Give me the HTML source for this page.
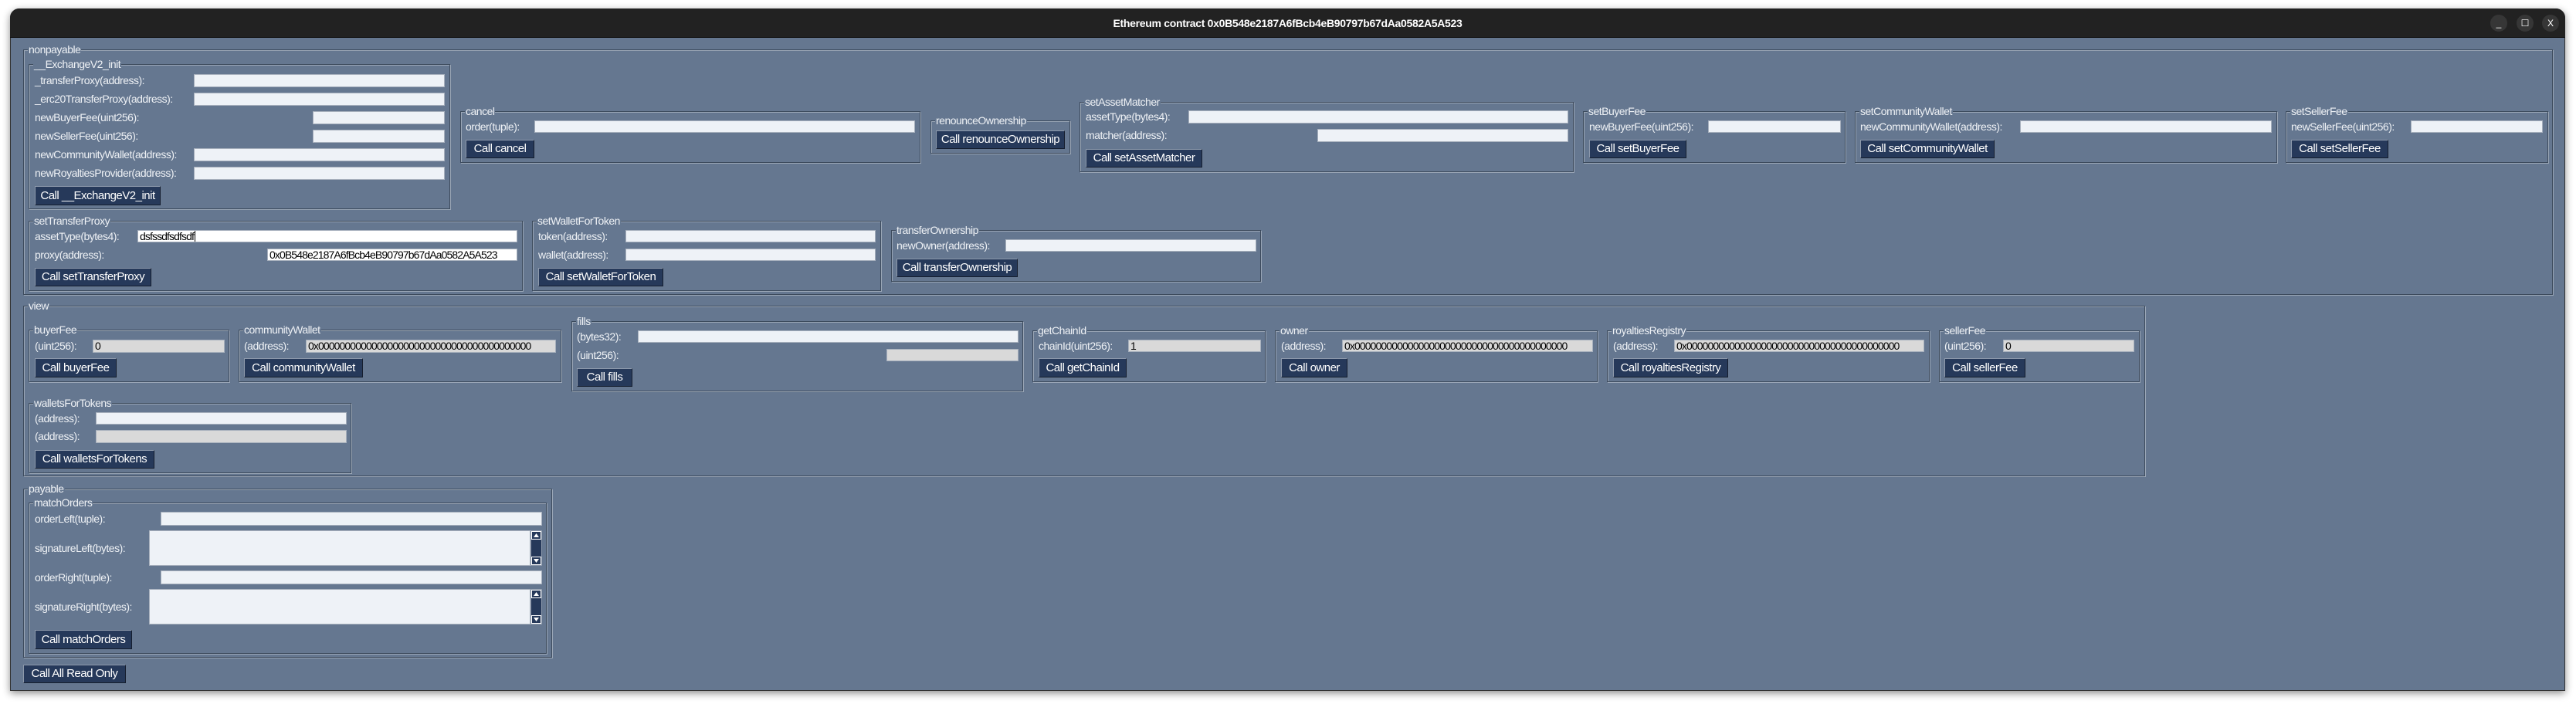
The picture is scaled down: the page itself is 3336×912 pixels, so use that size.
<!DOCTYPE html>
<html><head><meta charset="utf-8">
<style>
*{box-sizing:border-box;margin:0;padding:0}
html,body{width:3336px;height:912px;background:#fff;overflow:hidden;font-family:"Liberation Sans",sans-serif;font-size:14px;letter-spacing:-0.5px;color:#eef1f5}
#win{position:absolute;left:13px;top:11px;width:3309px;height:884px;background:#657790;border-radius:12px 12px 0 0;box-shadow:0 3px 10px rgba(0,0,0,.45);border:1px solid #333}
#tb{position:absolute;left:13px;top:11px;width:3309px;height:38px;background:#222;border-radius:12px 12px 0 0;border-bottom:1px solid #111}
#title{position:absolute;left:13px;top:11px;width:3309px;height:38px;line-height:38px;text-align:center;font-weight:bold;color:#fff;font-size:14px;letter-spacing:-0.3px}
.cb{position:absolute;top:19px;width:22px;height:22px;border-radius:50%;background:#363636;color:#fff;font-size:12px;text-align:center;line-height:22px;letter-spacing:0}
.fs{position:absolute;border:1px solid #3c4a5c;box-shadow:inset 1px 1px 0 #9aa6b6,1px 1px 0 #9aa6b6}
.lg{position:absolute;left:5px;top:-9px;background:#657790;padding:0 1px;line-height:16px;white-space:nowrap}
.lb{position:absolute;white-space:nowrap;line-height:17px}
.in{position:absolute;background:#eef2f7;border:1px solid #a7b0bd;color:#000;padding-left:2px;line-height:15px;white-space:nowrap;overflow:hidden;letter-spacing:-0.9px;text-overflow:clip}
.ro{background:#d9d9d9}
.wh{background:#fff}
.bt{position:absolute;background:#26395a;border:1px solid;border-color:#8d99ab #151e2e #151e2e #8d99ab;color:#fff;text-align:center;white-space:nowrap;font-size:15px}
.sb{position:absolute;background:#26395a;border:1px solid #8d99ab}
.ar{position:absolute;left:0;width:13px;height:11px;border:1px solid #fff;background:#26395a}
</style></head><body>
<div id="win"></div>
<div id="tb"></div>
<div id="title">Ethereum contract 0x0B548e2187A6fBcb4eB90797b67dAa0582A5A523</div>
<div class="cb" style="left:3225px">_</div>
<div class="cb" style="left:3259px">☐</div>
<div class="cb" style="left:3292px">X</div>

<div class="fs" style="left:30px;top:64px;width:3276px;height:318px"><div class="lg">nonpayable</div></div>
<div class="fs" style="left:30px;top:396px;width:2748px;height:221px"><div class="lg">view</div></div>
<div class="fs" style="left:30px;top:633px;width:685px;height:219px"><div class="lg">payable</div></div>

<div class="fs" style="left:37px;top:83px;width:546px;height:188px"><div class="lg">__ExchangeV2_init</div></div>
<div class="lb" style="left:45px;top:96px">_transferProxy(address):</div><div class="in" style="left:251px;top:96px;width:325px;height:17px"></div>
<div class="lb" style="left:45px;top:120px">_erc20TransferProxy(address):</div><div class="in" style="left:251px;top:120px;width:325px;height:17px"></div>
<div class="lb" style="left:45px;top:144px">newBuyerFee(uint256):</div><div class="in" style="left:405px;top:144px;width:171px;height:17px"></div>
<div class="lb" style="left:45px;top:168px">newSellerFee(uint256):</div><div class="in" style="left:405px;top:168px;width:171px;height:17px"></div>
<div class="lb" style="left:45px;top:192px">newCommunityWallet(address):</div><div class="in" style="left:251px;top:192px;width:325px;height:17px"></div>
<div class="lb" style="left:45px;top:216px">newRoyaltiesProvider(address):</div><div class="in" style="left:251px;top:216px;width:325px;height:17px"></div>
<div class="bt" style="left:45px;top:241px;width:163px;height:25px;line-height:23px">Call __ExchangeV2_init</div>

<div class="fs" style="left:596px;top:144px;width:596px;height:67px"><div class="lg">cancel</div></div>
<div class="lb" style="left:603px;top:156px;line-height:16px">order(tuple):</div><div class="in" style="left:692px;top:156px;width:493px;height:16px"></div>
<div class="bt" style="left:603px;top:181px;width:89px;height:24px;line-height:22px">Call cancel</div>

<div class="fs" style="left:1205px;top:156px;width:181px;height:43px"><div class="lg">renounceOwnership</div></div>
<div class="bt" style="left:1212px;top:169px;width:167px;height:24px;line-height:22px">Call renounceOwnership</div>

<div class="fs" style="left:1398px;top:132px;width:640px;height:91px"><div class="lg">setAssetMatcher</div></div>
<div class="lb" style="left:1406px;top:143px">assetType(bytes4):</div><div class="in" style="left:1539px;top:143px;width:492px;height:17px"></div>
<div class="lb" style="left:1406px;top:167px">matcher(address):</div><div class="in" style="left:1706px;top:167px;width:325px;height:17px"></div>
<div class="bt" style="left:1406px;top:193px;width:151px;height:24px;line-height:22px">Call setAssetMatcher</div>

<div class="fs" style="left:2050px;top:144px;width:340px;height:67px"><div class="lg">setBuyerFee</div></div>
<div class="lb" style="left:2058px;top:156px;line-height:16px">newBuyerFee(uint256):</div><div class="in" style="left:2212px;top:156px;width:172px;height:16px"></div>
<div class="bt" style="left:2058px;top:181px;width:126px;height:24px;line-height:22px">Call setBuyerFee</div>

<div class="fs" style="left:2402px;top:144px;width:547px;height:67px"><div class="lg">setCommunityWallet</div></div>
<div class="lb" style="left:2409px;top:156px;line-height:16px">newCommunityWallet(address):</div><div class="in" style="left:2616px;top:156px;width:326px;height:16px"></div>
<div class="bt" style="left:2409px;top:181px;width:174px;height:24px;line-height:22px">Call setCommunityWallet</div>

<div class="fs" style="left:2960px;top:144px;width:340px;height:67px"><div class="lg">setSellerFee</div></div>
<div class="lb" style="left:2967px;top:156px;line-height:16px">newSellerFee(uint256):</div><div class="in" style="left:3122px;top:156px;width:171px;height:16px"></div>
<div class="bt" style="left:2967px;top:181px;width:126px;height:24px;line-height:22px">Call setSellerFee</div>

<div class="fs" style="left:37px;top:286px;width:640px;height:91px"><div class="lg">setTransferProxy</div></div>
<div class="lb" style="left:45px;top:298px;line-height:16px">assetType(bytes4):</div><div class="in wh" style="left:178px;top:298px;width:492px;height:16px;line-height:14px">dsfssdfsdfsdf<span style="border-left:1px solid #000;margin-left:1px"></span></div>
<div class="lb" style="left:45px;top:322px;line-height:16px">proxy(address):</div><div class="in wh" style="left:346px;top:322px;width:324px;height:16px;line-height:14px">0x0B548e2187A6fBcb4eB90797b67dAa0582A5A523</div>
<div class="bt" style="left:45px;top:347px;width:151px;height:24px;line-height:22px">Call setTransferProxy</div>

<div class="fs" style="left:689px;top:286px;width:452px;height:91px"><div class="lg">setWalletForToken</div></div>
<div class="lb" style="left:697px;top:298px;line-height:16px">token(address):</div><div class="in" style="left:810px;top:298px;width:324px;height:16px"></div>
<div class="lb" style="left:697px;top:322px;line-height:16px">wallet(address):</div><div class="in" style="left:810px;top:322px;width:324px;height:16px"></div>
<div class="bt" style="left:697px;top:347px;width:162px;height:24px;line-height:22px">Call setWalletForToken</div>

<div class="fs" style="left:1154px;top:298px;width:479px;height:67px"><div class="lg">transferOwnership</div></div>
<div class="lb" style="left:1161px;top:310px;line-height:16px">newOwner(address):</div><div class="in" style="left:1302px;top:310px;width:325px;height:16px"></div>
<div class="bt" style="left:1161px;top:335px;width:157px;height:24px;line-height:22px">Call transferOwnership</div>

<div class="fs" style="left:37px;top:427px;width:260px;height:68px"><div class="lg">buyerFee</div></div>
<div class="lb" style="left:45px;top:440px">(uint256):</div><div class="in ro" style="left:120px;top:440px;width:171px;height:17px">0</div>
<div class="bt" style="left:45px;top:464px;width:106px;height:25px;line-height:23px">Call buyerFee</div>

<div class="fs" style="left:309px;top:427px;width:418px;height:68px"><div class="lg">communityWallet</div></div>
<div class="lb" style="left:316px;top:440px">(address):</div><div class="in ro" style="left:396px;top:440px;width:324px;height:17px">0x0000000000000000000000000000000000000000</div>
<div class="bt" style="left:316px;top:464px;width:154px;height:25px;line-height:23px">Call communityWallet</div>

<div class="fs" style="left:740px;top:416px;width:585px;height:91px"><div class="lg">fills</div></div>
<div class="lb" style="left:747px;top:428px;line-height:16px">(bytes32):</div><div class="in" style="left:826px;top:428px;width:493px;height:16px"></div>
<div class="lb" style="left:747px;top:452px;line-height:16px">(uint256):</div><div class="in ro" style="left:1148px;top:452px;width:171px;height:16px"></div>
<div class="bt" style="left:747px;top:477px;width:72px;height:24px;line-height:22px">Call fills</div>

<div class="fs" style="left:1337px;top:428px;width:302px;height:67px"><div class="lg">getChainId</div></div>
<div class="lb" style="left:1345px;top:440px;line-height:16px">chainId(uint256):</div><div class="in ro" style="left:1461px;top:440px;width:172px;height:16px">1</div>
<div class="bt" style="left:1345px;top:464px;width:114px;height:25px;line-height:23px">Call getChainId</div>

<div class="fs" style="left:1651px;top:428px;width:418px;height:67px"><div class="lg">owner</div></div>
<div class="lb" style="left:1659px;top:440px;line-height:16px">(address):</div><div class="in ro" style="left:1738px;top:440px;width:325px;height:16px">0x0000000000000000000000000000000000000000</div>
<div class="bt" style="left:1659px;top:464px;width:86px;height:25px;line-height:23px">Call owner</div>

<div class="fs" style="left:2081px;top:428px;width:418px;height:67px"><div class="lg">royaltiesRegistry</div></div>
<div class="lb" style="left:2089px;top:440px;line-height:16px">(address):</div><div class="in ro" style="left:2168px;top:440px;width:324px;height:16px">0x0000000000000000000000000000000000000000</div>
<div class="bt" style="left:2089px;top:464px;width:149px;height:25px;line-height:23px">Call royaltiesRegistry</div>

<div class="fs" style="left:2511px;top:428px;width:260px;height:67px"><div class="lg">sellerFee</div></div>
<div class="lb" style="left:2518px;top:440px;line-height:16px">(uint256):</div><div class="in ro" style="left:2594px;top:440px;width:170px;height:16px">0</div>
<div class="bt" style="left:2518px;top:464px;width:105px;height:25px;line-height:23px">Call sellerFee</div>

<div class="fs" style="left:37px;top:522px;width:418px;height:91px"><div class="lg">walletsForTokens</div></div>
<div class="lb" style="left:45px;top:534px;line-height:16px">(address):</div><div class="in" style="left:124px;top:534px;width:325px;height:16px"></div>
<div class="lb" style="left:45px;top:557px">(address):</div><div class="in ro" style="left:124px;top:557px;width:325px;height:17px"></div>
<div class="bt" style="left:45px;top:583px;width:155px;height:24px;line-height:22px">Call walletsForTokens</div>

<div class="fs" style="left:37px;top:651px;width:671px;height:196px"><div class="lg">matchOrders</div></div>
<div class="lb" style="left:45px;top:663px;line-height:18px">orderLeft(tuple):</div><div class="in" style="left:208px;top:663px;width:494px;height:18px"></div>
<div class="lb" style="left:45px;top:687px;line-height:46px">signatureLeft(bytes):</div><div class="in" style="left:193px;top:687px;width:494px;height:46px"></div>
<div class="sb" style="left:687px;top:687px;width:15px;height:46px"><div class="ar" style="top:0"><svg width="11" height="9" style="display:block"><path d="M2 7L5.5 2L9 7Z" fill="#fff"/></svg></div><div class="ar" style="bottom:0"><svg width="11" height="9" style="display:block"><path d="M2 2L5.5 7L9 2Z" fill="#fff"/></svg></div></div>
<div class="lb" style="left:45px;top:739px;line-height:18px">orderRight(tuple):</div><div class="in" style="left:208px;top:739px;width:494px;height:18px"></div>
<div class="lb" style="left:45px;top:763px;line-height:46px">signatureRight(bytes):</div><div class="in" style="left:193px;top:763px;width:494px;height:46px"></div>
<div class="sb" style="left:687px;top:763px;width:15px;height:46px"><div class="ar" style="top:0"><svg width="11" height="9" style="display:block"><path d="M2 7L5.5 2L9 7Z" fill="#fff"/></svg></div><div class="ar" style="bottom:0"><svg width="11" height="9" style="display:block"><path d="M2 2L5.5 7L9 2Z" fill="#fff"/></svg></div></div>
<div class="bt" style="left:45px;top:816px;width:126px;height:25px;line-height:23px">Call matchOrders</div>

<div class="bt" style="left:30px;top:861px;width:133px;height:24px;line-height:22px">Call All Read Only</div>
</body></html>
